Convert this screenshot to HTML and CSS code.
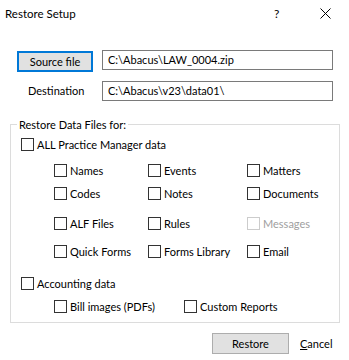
FILE: index.html
```html
<!DOCTYPE html>
<html>
<head>
<meta charset="utf-8">
<link rel="stylesheet" href="styles.css">
</head>
<body>
<div class="dialog">
  <div class="titlebar">
    <span class="title">Restore Setup</span>
    <span class="help">?</span>
    <span class="close">
      <svg width="11" height="11" viewBox="0 0 11 11"><path d="M0.5 0.5 L10.5 10.5 M10.5 0.5 L0.5 10.5" stroke="#000" stroke-width="1" fill="none"/></svg>
    </span>
  </div>
  <div class="main">
    <div class="row row-source">
      <button class="btn btn-default">Source file</button>
      <div class="input">C:\Abacus\LAW_0004.zip</div>
    </div>
    <div class="row row-dest">
      <span class="label">Destination</span>
      <div class="input">C:\Abacus\v23\data01\</div>
    </div>
    <div class="group">
      <span class="legend">Restore Data Files for:</span>
      <label class="check check-all"><span class="box"></span><span>ALL Practice Manager data</span></label>
      <div class="grid">
        <label class="check"><span class="box"></span><span>Names</span></label>
        <label class="check"><span class="box"></span><span>Events</span></label>
        <label class="check"><span class="box"></span><span>Matters</span></label>
        <label class="check"><span class="box"></span><span>Codes</span></label>
        <label class="check"><span class="box"></span><span>Notes</span></label>
        <label class="check"><span class="box"></span><span>Documents</span></label>
        <label class="check"><span class="box"></span><span>ALF Files</span></label>
        <label class="check"><span class="box"></span><span>Rules</span></label>
        <label class="check disabled"><span class="box"></span><span>Messages</span></label>
        <label class="check"><span class="box"></span><span>Quick Forms</span></label>
        <label class="check"><span class="box"></span><span>Forms Library</span></label>
        <label class="check"><span class="box"></span><span>Email</span></label>
      </div>
      <label class="check check-acc"><span class="box"></span><span>Accounting data</span></label>
      <div class="acc-row">
        <label class="check check-bill"><span class="box"></span><span>Bill images (PDFs)</span></label>
        <label class="check"><span class="box"></span><span>Custom Reports</span></label>
      </div>
    </div>
    <div class="footer">
      <button class="btn">Restore</button>
      <span class="link"><u>C</u>ancel</span>
    </div>
  </div>
</div>
</body>
</html>
```

FILE: styles.css
```css
* { box-sizing: border-box; }
html, body {
  margin: 0;
  padding: 0;
  background: #ffffff;
}
body {
  font-family: "Lato", "Noto Sans", sans-serif;
  font-size: 11px;
  color: #000;
  width: 349px;
  height: 360px;
  overflow: hidden;
}
.dialog {
  width: 349px;
  height: 360px;
}
.titlebar {
  height: 27px;
  display: flex;
  align-items: center;
  padding-left: 5px;
}
.title {
  flex: 1;
  line-height: 16px;
  font-size: 11.5px;
}
.help {
  width: 8px;
  margin-right: 38px;
  line-height: 16px;
  font-size: 12px;
}
.close {
  width: 29px;
  display: flex;
  align-items: center;
}
.close svg { display: block; }
.main {
  padding: 0 9px 0 10px;
}
.row {
  display: flex;
  align-items: flex-start;
}
.row-source {
  margin-top: 23px;
  height: 21px;
}
.row-dest {
  margin-top: 10px;
  height: 20px;
  align-items: center;
}
.btn {
  font: inherit;
  color: #000;
  background: #e1e1e1;
  border: 1px solid #adadad;
  height: 21px;
  width: 77px;
  padding: 0;
  line-height: 17px;
}
.btn-default {
  border: 2px solid #0078d7;
  width: 76px;
  margin-left: 7px;
  margin-top: 1px;
}
.input {
  width: 231px;
  height: 20px;
  border: 1px solid #7a7a7a;
  padding: 0 5px;
  line-height: 18px;
  margin-left: auto;
  margin-right: 7px;
  white-space: nowrap;
}
.label {
  margin-left: 18px;
  line-height: 16px;
}
.group {
  margin-top: 23px;
  border: 1px solid #dcdcdc;
  width: 330px;
  height: 199px;
  display: flex;
  flex-direction: column;
  align-items: flex-start;
}
.legend {
  margin-top: -8px;
  margin-left: 6px;
  padding: 0 2px;
  background: #fff;
  line-height: 16px;
}
.check {
  display: flex;
  align-items: center;
  height: 13px;
  white-space: nowrap;
}
.box {
  width: 13px;
  height: 13px;
  border: 1px solid #333333;
  background: #fff;
  margin-right: 3px;
  flex: none;
}
.check span:last-child { line-height: 16px; }
.disabled { color: #a0a0a0; }
.disabled .box { border-color: #cccccc; }
.check-all {
  margin-top: 5px;
  margin-left: 10px;
}
.grid {
  margin-top: 13px;
  margin-left: 43px;
  display: grid;
  grid-template-columns: 94px 99px 80px;
  grid-template-rows: 23px 30px 28px 13px;
  align-items: start;
}
.check-acc {
  margin-top: 19px;
  margin-left: 10px;
}
.acc-row {
  margin-top: 10px;
  margin-left: 43px;
  display: flex;
}
.check-bill { width: 130px; }
.footer {
  margin-top: 10px;
  display: flex;
  align-items: center;
  padding-left: 202px;
}
.link {
  margin-left: 11px;
  line-height: 16px;
}
```
